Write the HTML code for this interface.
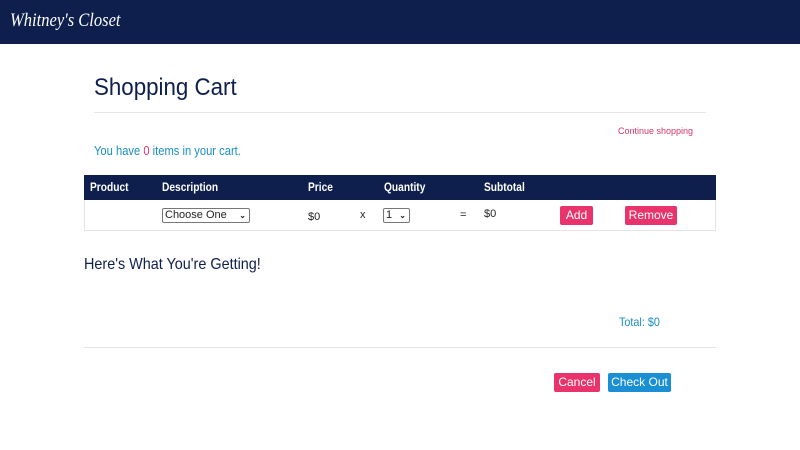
<!DOCTYPE html>
<html><head><style>
body{margin:0;font-family:"Liberation Sans",sans-serif;background:#fff;width:800px;height:450px;overflow:hidden;position:relative}
.nav{position:absolute;left:0;top:0;width:800px;height:44px;background:#0e1f4d}
.logo{position:absolute;left:10px;top:10px;color:#fff;font-family:"Liberation Serif",serif;font-style:italic;font-size:19px;transform:scaleX(0.87);transform-origin:left}
.abs{position:absolute;white-space:nowrap}
h1{position:absolute;left:94px;top:74px;margin:0;font-weight:normal;font-size:24px;color:#0e1f4d;transform:scaleX(0.93);transform-origin:left}
.hr{position:absolute;height:1px;background:#e5e5e5}
.th{position:absolute;top:180px;color:#fff;font-weight:bold;font-size:12px;transform:scaleX(0.85);transform-origin:left}
.td{position:absolute;font-size:11px;color:#222}
.btn{position:absolute;color:#fff;font-size:12px;text-align:center;border-radius:2px}
.sel{position:absolute;font-size:11px;height:13px;line-height:13px;border:1px solid #777;border-radius:2px;background:#fff;color:#222;padding-left:2px;box-sizing:content-box}
.sel b{position:absolute;right:3px;top:0;font-size:8px;font-weight:bold}
</style></head><body>
<div class="nav"><div class="logo">Whitney's Closet</div></div>
<h1>Shopping Cart</h1>
<div class="hr" style="left:94px;top:112px;width:612px"></div>
<div class="abs" style="left:618px;top:126px;font-size:9px;color:#d63466">Continue shopping</div>
<div class="abs" style="left:94px;top:143px;font-size:13px;color:#1a8fc4;transform:scaleX(0.86);transform-origin:left">You have <span style="color:#e8336c">0</span> items in your cart.</div>
<div class="abs" style="left:84px;top:175px;width:632px;height:25px;background:#0e1f4d"></div>
<div class="abs" style="left:84px;top:200px;width:630px;height:30px;border:1px solid #e5e5e5;border-top:none"></div>
<div class="th" style="left:90px">Product</div>
<div class="th" style="left:162px">Description</div>
<div class="th" style="left:308px">Price</div>
<div class="th" style="left:384px">Quantity</div>
<div class="th" style="left:484px">Subtotal</div>
<div class="sel" style="left:162px;top:208px;width:84px">Choose One<b>&#8964;</b></div>
<div class="td" style="left:308px;top:211px">$0</div>
<div class="td" style="left:360px;top:209px">x</div>
<div class="sel" style="left:383px;top:208px;width:23px">1<b>&#8964;</b></div>
<div class="td" style="left:460px;top:209px">=</div>
<div class="td" style="left:484px;top:208px">$0</div>
<div class="btn" style="left:560px;top:206px;width:33px;height:19px;line-height:19px;background:#e8336c">Add</div>
<div class="btn" style="left:625px;top:206px;width:52px;height:19px;line-height:19px;background:#e8336c">Remove</div>
<div class="abs" style="left:84px;top:256px;font-size:16px;color:#0e1f4d;transform:scaleX(0.9);transform-origin:left">Here's What You're Getting!</div>
<div class="abs" style="left:619px;top:315px;font-size:12px;color:#1a8fc4;transform:scaleX(0.9);transform-origin:left">Total: $0</div>
<div class="hr" style="left:84px;top:347px;width:632px"></div>
<div class="btn" style="left:554px;top:373px;width:46px;height:19px;line-height:19px;background:#e8336c">Cancel</div>
<div class="btn" style="left:608px;top:373px;width:63px;height:19px;line-height:19px;background:#1a8fd4">Check Out</div>
</body></html>
